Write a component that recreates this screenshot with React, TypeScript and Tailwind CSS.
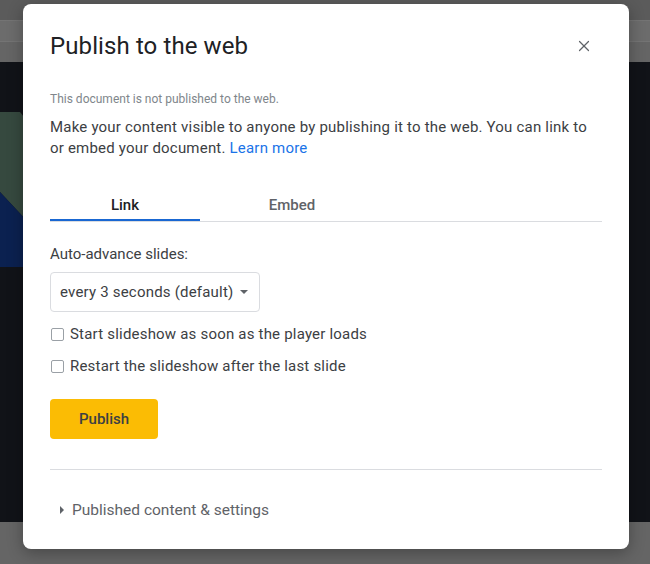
import { X } from "lucide-react";

function Backdrop() {
  return (
    <div className="flex h-[564px] w-full flex-col">
      <div className="flex h-[20px] items-center gap-[60px] bg-[#5b5b5b] pl-[50px]">
        <div className="h-[8px] w-[10px] bg-[#3a3a3a]" />
        <div className="h-[6px] w-[70px] bg-[#535353]" />
        <div className="h-[6px] w-[40px] bg-[#535353]" />
        <div className="h-[6px] w-[40px] bg-[#535353]" />
        <div className="h-[6px] w-[50px] bg-[#535353]" />
      </div>
      <div className="h-[22px] border-y border-[#747474] bg-[#6c6c6c]" />
      <div className="h-[20px] bg-[#656565]" />
      <div className="relative flex-1 bg-[#111318]">
        <svg className="absolute left-0 top-[50px]" width="30" height="160" viewBox="0 0 30 160">
          <polygon points="0,0 20,0 28,10 28,110 0,80" fill="#36493f" />
          <polygon points="0,80 28,110 28,155 0,155" fill="#0b2150" />
        </svg>
      </div>
      <div className="h-[42px] bg-[#656565]" />
    </div>
  );
}

function Checkbox({ label }: { label: string }) {
  return (
    <label className="flex h-[20px] items-center">
      <span className="ml-[1px] mr-[6px] h-[13px] w-[13px] rounded-[2px] border border-[#9aa0a6] bg-white" />
      <span className="text-[15px] leading-[20px] tracking-[0.2px] text-[#3c4043]">{label}</span>
    </label>
  );
}

export default function App() {
  return (
    <div className="relative h-[564px] w-[650px] overflow-hidden font-['Roboto','Liberation_Sans',sans-serif]">
      <Backdrop />
      <div className="absolute left-[23px] top-[4px] h-[545px] w-[606px] rounded-lg bg-white px-[27px] shadow-[0_4px_16px_rgba(0,0,0,0.3)]">
        <div className="flex items-center justify-between pt-[28px]">
          <h1 className="text-[24px] leading-[28px] tracking-[0.1px] text-[#202124]">Publish to the web</h1>
          <X className="mr-[9px] h-[18px] w-[18px] text-[#5f6368]" strokeWidth={1.6} />
        </div>

        <p className="mt-[31px] text-[12px] leading-[16px] text-[#80868b]">
          This document is not published to the web.
        </p>
        <p className="mt-[10px] max-w-[545px] text-[15px] leading-[21px] tracking-[0.2px] text-[#3c4043]">
          Make your content visible to anyone by publishing it to the web. You can link to or
          embed your document. <span className="text-[#1a73e8]">Learn more</span>
        </p>

        <div className="mt-[36px] flex border-b border-[#dadce0]">
          <div className="w-[150px] border-b-2 border-[#1967d2] pb-[4px] text-center text-[15px] font-medium leading-[20px] text-[#202124]">
            Link
          </div>
          <div className="w-[184px] pb-[4px] text-center text-[15px] font-medium leading-[20px] text-[#5f6368]">
            Embed
          </div>
        </div>

        <div className="mt-[22px] text-[15px] leading-[20px] text-[#3c4043]">Auto-advance slides:</div>
        <div className="mt-[8px] flex h-[40px] w-[210px] items-center justify-between rounded border border-[#dadce0] pl-[9px] pr-[11px]">
          <span className="text-[15px] tracking-[0.2px] text-[#3c4043]">every 3 seconds (default)</span>
          <span className="h-0 w-0 border-x-[4px] border-t-[4px] border-x-transparent border-t-[#5f6368]" />
        </div>

        <div className="mt-[12px] flex flex-col gap-[12px]">
          <Checkbox label="Start slideshow as soon as the player loads" />
          <Checkbox label="Restart the slideshow after the last slide" />
        </div>

        <button className="mt-[23px] h-[40px] w-[108px] rounded bg-[#fbbc04] text-[15px] font-medium text-[#3c4043]">
          Publish
        </button>

        <div className="mt-[30px] h-px bg-[#dadce0]" />

        <div className="mt-[30px] flex items-center">
          <span className="ml-[10px] mr-[8px] h-0 w-0 border-y-[4px] border-l-[4px] border-y-transparent border-l-[#5f6368]" />
          <span className="text-[15.5px] leading-[20px] text-[#5f6368]">Published content &amp; settings</span>
        </div>
      </div>
    </div>
  );
}
